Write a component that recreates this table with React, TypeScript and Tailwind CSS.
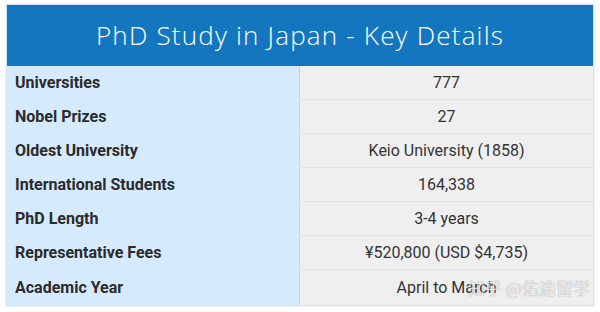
import React from "react";

const rows: [string, string][] = [
  ["Universities", "777"],
  ["Nobel Prizes", "27"],
  ["Oldest University", "Keio University (1858)"],
  ["International Students", "164,338"],
  ["PhD Length", "3-4 years"],
  ["Representative Fees", "¥520,800 (USD $4,735)"],
  ["Academic Year", "April to March"],
];

export default function App() {
  return (
    <div className="w-[600px] h-[312px] overflow-hidden bg-white pt-[4px] pl-[6px] relative" style={{ fontFamily: "Roboto, 'Noto Sans', sans-serif" }}>
      <div className="w-[588px] border border-[#d4e3ef] shadow-[0_0_2px_rgba(0,0,0,0.15)]">
        <div className="h-[61px] bg-[#1576c0] flex items-center justify-center text-white text-[26px] tracking-[1.2px]" style={{ fontFamily: "'Open Sans', Lato, sans-serif", fontWeight: 300 }}>
          PhD Study in Japan - Key Details
        </div>
        {rows.map(([k, v], i) => (
          <div key={k} className={`flex ${i < rows.length - 1 ? "h-[34px] border-b border-[#e2e6ea]" : "h-[35px]"}`}>
            <div className="w-[293px] bg-[#d5eafc] border-r border-[#c9d3dc] flex items-center pl-[8px] pt-[1px] text-[16px] font-bold text-[#2b2b2b]">
              {k}
            </div>
            <div className="flex-1 bg-[#efefef] flex items-center justify-center pt-[1px] text-[16px] text-[#333]">
              {v}
            </div>
          </div>
        ))}
      </div>
      <div className="absolute left-[468px] top-[276px] whitespace-nowrap text-[17px] leading-[24px] text-white/80" style={{ fontFamily: "'Noto Sans CJK SC', sans-serif", textShadow: "0 0 1px rgba(0,0,0,0.45)" }}>
        知乎 @佑途留学
      </div>
    </div>
  );
}
